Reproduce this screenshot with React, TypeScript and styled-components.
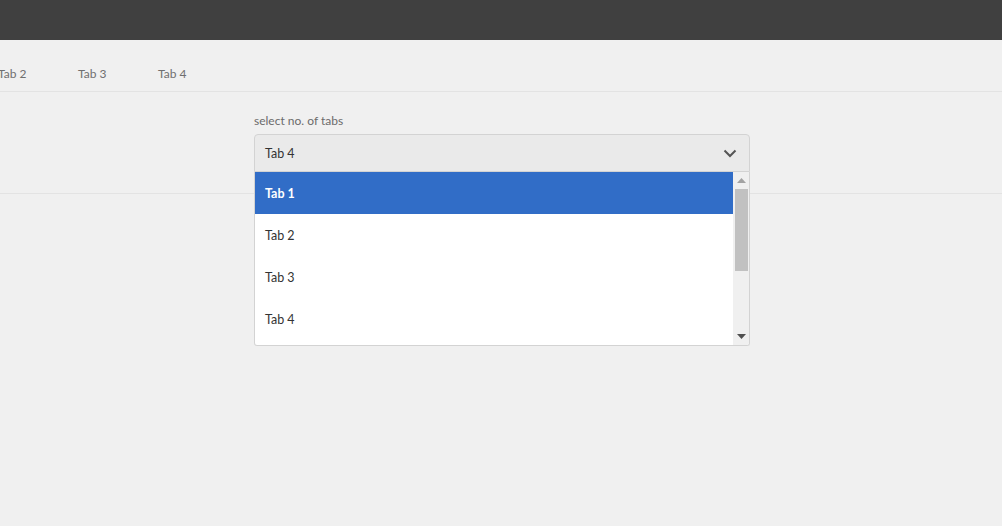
import React from 'react'
import styled, { createGlobalStyle } from 'styled-components'

const GlobalStyle = createGlobalStyle`
    html, body {
        margin: 0;
        padding: 0;
        background: #f0f0f0;
        overflow: hidden;
    }
    body {
        font-family: Lato, "Open Sans", sans-serif;
    }
`

const Page = styled.div`
    width: 1002px;
    height: 526px;
    background: #f0f0f0;
    overflow: hidden;
`

const TopBar = styled.div`
    height: 40px;
    background: #404040;
`

const TabRow = styled.div`
    display: flex;
    height: 52px;
    align-items: flex-start;
    padding-top: 26px;
    box-sizing: border-box;
    margin-left: -82px;
    border-bottom: 1px solid #e3e3e3;
`

const Tab = styled.div`
    width: 80px;
    font-size: 12px;
    line-height: 15px;
    color: #6f6f6f;
`

const Content = styled.div`
    height: 102px;
    border-bottom: 1px solid #e3e3e3;
    padding-top: 22px;
    padding-left: 254px;
    box-sizing: border-box;
`

const Label = styled.div`
    font-size: 12px;
    color: #6b6b6b;
    height: 13px;
    line-height: 13px;
    margin-bottom: 7px;
`

const Field = styled.div`
    width: 496px;
    position: relative;
`

const SelectBox = styled.div`
    display: flex;
    align-items: center;
    justify-content: space-between;
    height: 38px;
    box-sizing: border-box;
    padding: 0 12px 0 10px;
    background: #eaeaea;
    border: 1px solid #d3d3d3;
    border-radius: 4px 4px 0 0;
    font-size: 12.5px;
    color: #333;
`

const Dropdown = styled.div`
    position: absolute;
    top: 38px;
    left: 0;
    width: 496px;
    height: 174px;
    box-sizing: border-box;
    display: flex;
    background: #fff;
    border: 1px solid #d3d3d3;
    border-top: none;
    border-radius: 0 0 3px 3px;
    overflow: hidden;
`

const List = styled.div`
    flex: 1;
    display: flex;
    flex-direction: column;
`

const Option = styled.div<{ $active?: boolean }>`
    height: 42px;
    flex: none;
    display: flex;
    align-items: center;
    padding-left: 10px;
    font-size: 12.5px;
    background: ${p => (p.$active ? '#316dc7' : '#fff')};
    color: ${p => (p.$active ? '#fff' : '#333')};
    font-weight: ${p => (p.$active ? 700 : 400)};
`

const Scrollbar = styled.div`
    width: 16px;
    background: #f0f0f0;
    display: flex;
    flex-direction: column;
    align-items: center;
`

const ArrowCell = styled.div`
    height: 17px;
    width: 100%;
    display: flex;
    align-items: center;
    justify-content: center;
`

const Thumb = styled.div`
    width: 13px;
    height: 82px;
    background: #c1c1c1;
`

const Track = styled.div`
    flex: 1;
`

const Chevron = () => (
  <svg width="14" height="9" viewBox="0 0 14 9">
    <path d="M1.5 1.5 L7 7 L12.5 1.5" fill="none" stroke="#555" strokeWidth="2" />
  </svg>
)

const Arrow: React.FC<{ up?: boolean }> = ({ up }) => (
  <svg width="9" height="5" viewBox="0 0 9 5">
    <path d={up ? 'M0 5 L4.5 0 L9 5 Z' : 'M0 0 L4.5 5 L9 0 Z'} fill={up ? '#a3a3a3' : '#505050'} />
  </svg>
)

const tabs = ['Tab 1', 'Tab 2', 'Tab 3', 'Tab 4']

const App: React.FC = () => {
  return (
    <Page>
      <GlobalStyle />
      <TopBar />
      <TabRow>
        {tabs.map(t => (
          <Tab key={t}>{t}</Tab>
        ))}
      </TabRow>
      <Content>
        <Label>select no. of tabs</Label>
        <Field>
          <SelectBox>
            <span>Tab 4</span>
            <Chevron />
          </SelectBox>
          <Dropdown>
            <List>
              {tabs.map((t, i) => (
                <Option key={t} $active={i === 0}>{t}</Option>
              ))}
            </List>
            <Scrollbar>
              <ArrowCell><Arrow up /></ArrowCell>
              <Thumb />
              <Track />
              <ArrowCell><Arrow /></ArrowCell>
            </Scrollbar>
          </Dropdown>
        </Field>
      </Content>
    </Page>
  )
}

export default App
